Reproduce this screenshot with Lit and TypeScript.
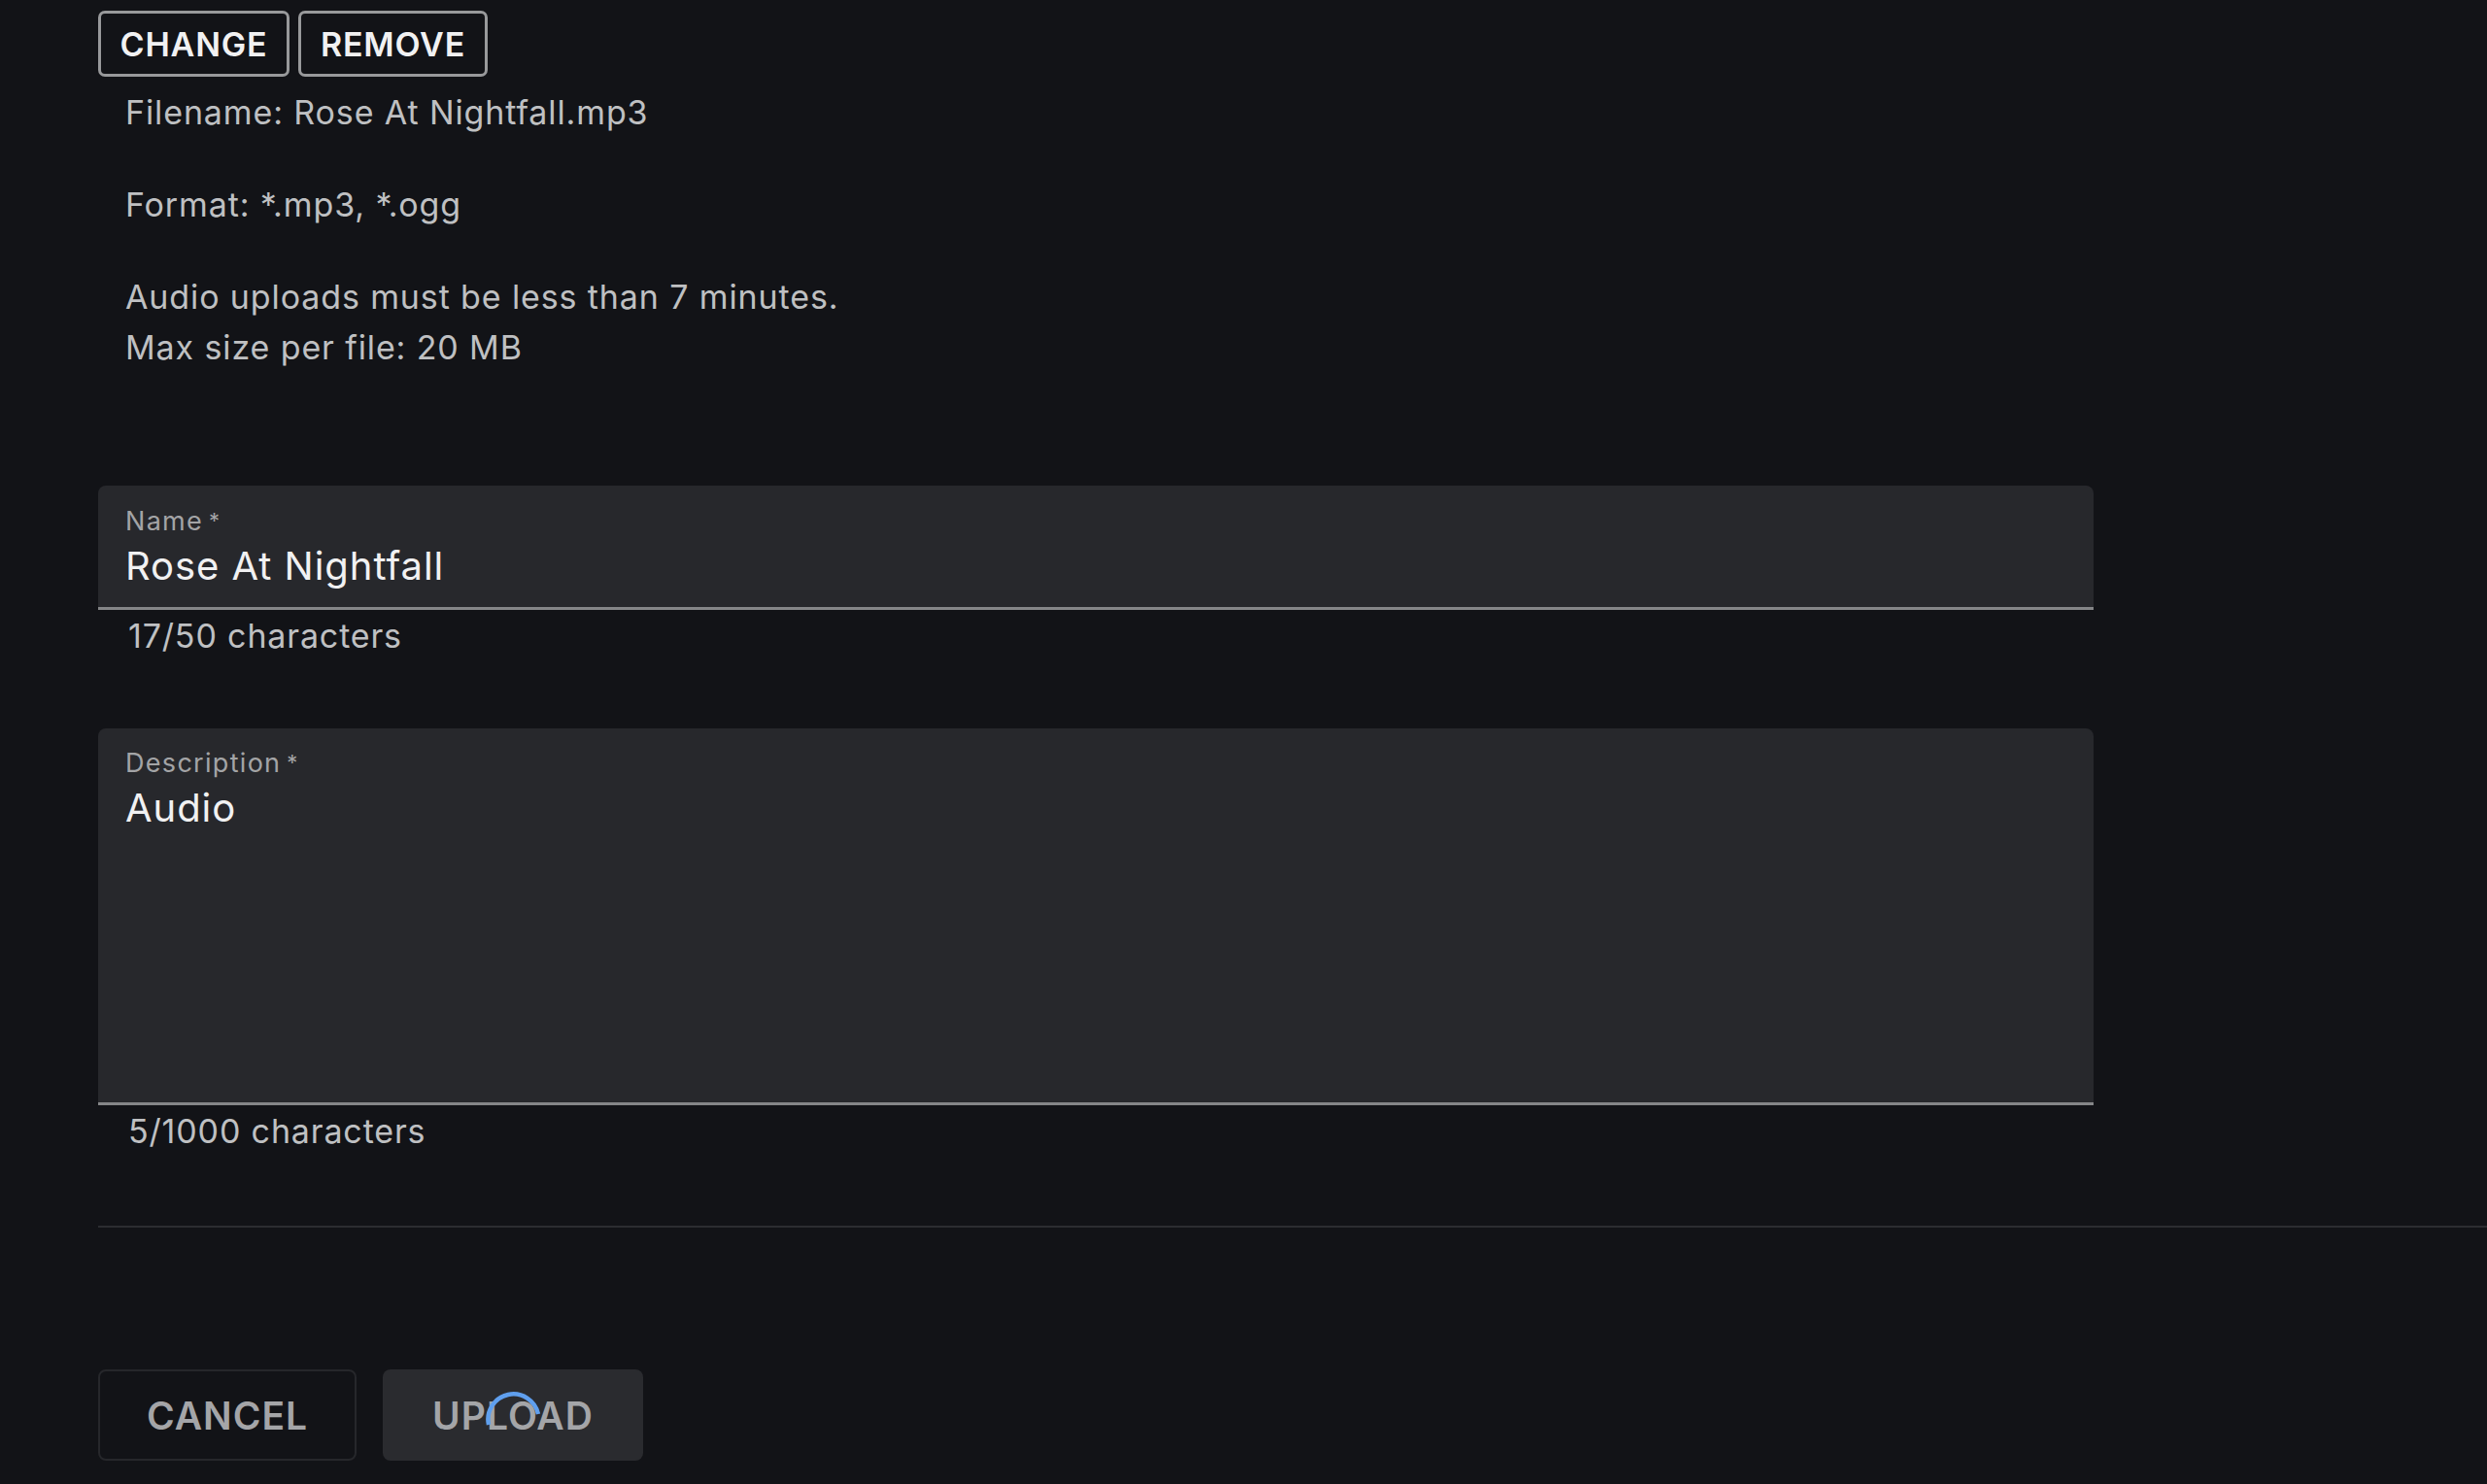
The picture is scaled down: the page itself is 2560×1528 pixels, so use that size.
import { LitElement, html, css } from "lit";
import { customElement } from "lit/decorators.js";

@customElement("app-root")
export class AppRoot extends LitElement {
  static styles = css`
    :host {
      display: block;
      width: 2560px;
      height: 1528px;
      overflow: hidden;
      box-sizing: border-box;
      padding: 11px 0 0 101px;
      background: #121317;
      font-family: Inter, "Noto Sans", sans-serif;
      color: #bfc0c2;
    }
    .top-actions { display: flex; gap: 9px; }
    .btn-small {
      box-sizing: border-box;
      height: 68px;
      width: 197px;
      display: flex;
      align-items: center;
      justify-content: center;
      border: 3px solid #98999b;
      border-radius: 7px;
      color: #f1f1f2;
      font-size: 34px;
      font-weight: 600;
      letter-spacing: 0.8px;
    }
    .btn-small.remove { width: 195px; }
    .info { margin: 11px 0 116px 28px; font-size: 34px; line-height: 52px; letter-spacing: 0.88px; }
    .info p { margin: 0 0 43px; }
    .info p:last-child { margin-bottom: 0; }
    .field {
      box-sizing: border-box;
      width: 2054px;
      height: 128px;
      padding: 19px 28px 0;
      background: #27282c;
      border-bottom: 3px solid #858688;
      border-radius: 8px 8px 0 0;
    }
    .field.tall { height: 388px; padding-top: 18px; }
    .label { font-size: 27px; line-height: 34px; color: #a3a4a6; letter-spacing: 1.3px; }
    .label span { font-size: 22px; vertical-align: 2px; margin-left: -3px; letter-spacing: 0; }
    .value { margin-top: 5px; font-size: 40px; line-height: 48px; color: #f1f1f2; letter-spacing: 0.95px; }
    .count { margin: 1px 0 69px 31px; font-size: 34px; line-height: 52px; letter-spacing: 0.85px; }
    .count.last { margin-bottom: 71px; }
    .divider { height: 2px; background: #2c2d31; margin-bottom: 146px; }
    .bottom-actions { display: flex; gap: 27px; }
    .btn-large {
      box-sizing: border-box;
      position: relative;
      height: 94px;
      width: 266px;
      display: flex;
      align-items: center;
      justify-content: center;
      border-radius: 8px;
      font-size: 39px;
      font-weight: 600;
      color: #a4a5a8;
      letter-spacing: 1px;
    }
    .cancel { border: 2px solid #26272b; }
    .upload { width: 268px; background: #2a2b2f; }
    .spinner { position: absolute; left: 104px; top: 17px; width: 60px; height: 60px; }
  `;

  render() {
    return html`
      <div class="top-actions">
        <div class="btn-small">CHANGE</div>
        <div class="btn-small remove">REMOVE</div>
      </div>
      <div class="info">
        <p>Filename: Rose At Nightfall.mp3</p>
        <p>Format: *.mp3, *.ogg</p>
        <p>Audio uploads must be less than 7 minutes.<br />Max size per file: 20 MB</p>
      </div>
      <div class="field">
        <div class="label">Name <span>*</span></div>
        <div class="value">Rose At Nightfall</div>
      </div>
      <div class="count">17/50 characters</div>
      <div class="field tall">
        <div class="label">Description <span>*</span></div>
        <div class="value">Audio</div>
      </div>
      <div class="count last">5/1000 characters</div>
      <div class="divider"></div>
      <div class="bottom-actions">
        <div class="btn-large cancel">CANCEL</div>
        <div class="btn-large upload">
          UPLOAD
          <svg class="spinner" viewBox="0 0 60 60" fill="none">
            <path d="M 5 40 A 26 26 0 1 1 56 29" stroke="#5f9fee" stroke-width="4.5" />
          </svg>
        </div>
      </div>
    `;
  }
}
